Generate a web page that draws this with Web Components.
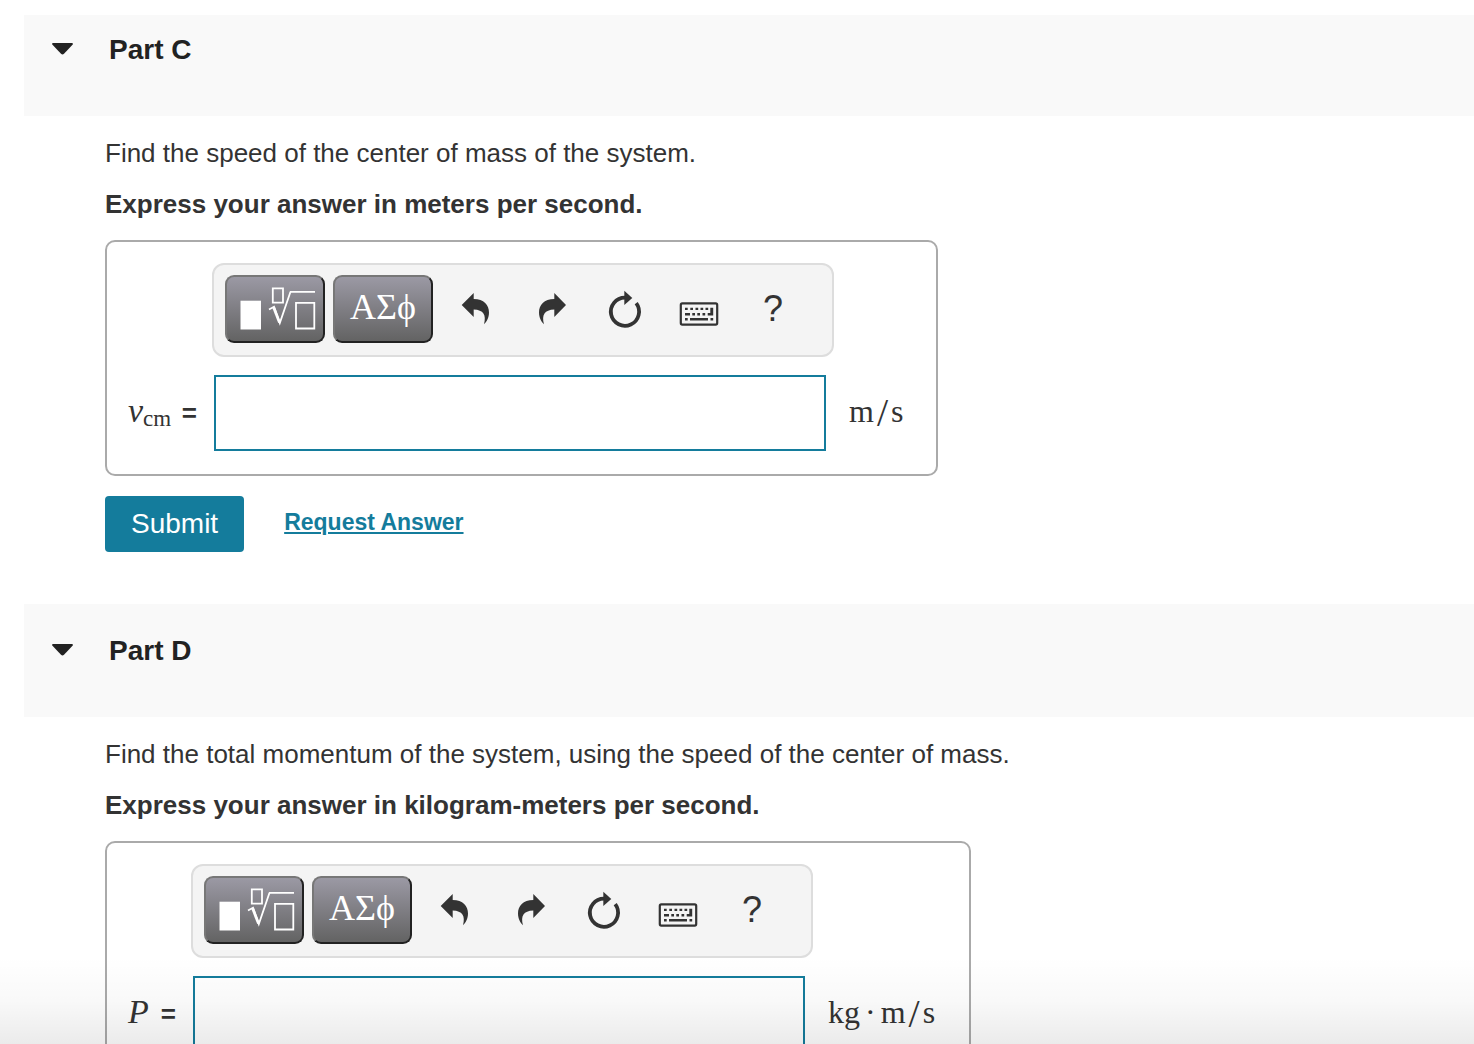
<!DOCTYPE html>
<html lang="en">
<head>
<meta charset="utf-8">
<title>Assignment</title>
<style>
  body { margin: 0; background: #fff; color: #333; font-family: "Liberation Sans", Arial, sans-serif; }
  answer-box i { font-size: 34px; line-height: 32px; }
  answer-box sub { font-size: 23px; line-height: 0; vertical-align: -4px; }
  answer-box .op { padding: 0 5px; }
  answer-box .slash { padding: 0 3px; font-size: 40px; line-height: 0; vertical-align: -4px; }
</style>
</head>
<body>
<assignment-page>
  <part-section heading="Part C" compact>
    <p>Find the speed of the center of mass of the system.</p>
    <p><strong>Express your answer in meters per second.</strong></p>
    <answer-box style="--label: 84px; --unit: 55px">
      <span slot="label"><i>v</i><sub>cm</sub></span>
      <span slot="unit">m<span class="slash">/</span>s</span>
    </answer-box>
    <answer-actions></answer-actions>
  </part-section>
  <part-section heading="Part D">
    <p>Find the total momentum of the system, using the speed of the center of mass.</p>
    <p><strong>Express your answer in kilogram-meters per second.</strong></p>
    <answer-box style="--label: 63px; --unit: 109px">
      <span slot="label"><i>P</i></span>
      <span slot="unit">kg<span class="op">·</span>m<span class="slash">/</span>s</span>
    </answer-box>
  </part-section>
</assignment-page>

<template id="page-t">
  <style>
    :host { display: block; position: relative; height: 100vh; overflow: hidden; }
    main { display: flex; flex-direction: column; gap: 52px; padding: 15px 0 0 24px; }
    .fade { position: absolute; inset: auto 0 0 0; height: 88px; pointer-events: none;
      background: linear-gradient(rgba(0,0,0,0), rgba(0,0,0,.025) 50%, rgba(0,0,0,.08)); }
  </style>
  <main><slot></slot></main>
  <div class="fade"></div>
</template>

<template id="part-t">
  <style>
    :host { display: block; }
    header { display: flex; align-items: center; gap: 36px; padding: 30px 28px 49px; background: #f9f9f9; color: #222; }
    :host([compact]) header { padding-top: 18px; }
    button { display: block; border: 0; padding: 0 0 3px; background: none; color: inherit; }
    svg { display: block; }
    h2 { margin: 0; font-size: 28px; line-height: 34px; }
    .body { display: flex; flex-direction: column; gap: 20px; padding: 22px 81px 0; font-size: 26px; line-height: 31px; }
    ::slotted(p) { margin: 0; }
  </style>
  <header>
    <button type="button" aria-label="Collapse"><svg width="21" height="12" viewBox="0 0 21 12"><path fill="#222" d="M1 0H20Q21.500 .5 20.500 1.800L12 10.800Q10.500 12.200 9 10.800L.5 1.800Q-.5 .5 1 0Z"/></svg></button>
    <h2></h2>
  </header>
  <div class="body"><slot></slot></div>
</template>

<template id="tools-t">
  <style>
    :host { display: flex; gap: 8px; padding: 10px 11px 12px; border: 2px solid #ddd; border-radius: 12px; background: #f4f4f4; }
    button { display: flex; align-items: center; justify-content: center; height: 68px; padding: 0; margin: 0; color: #333; }
    svg { display: block; }
    .key { width: 100px; border: 2px solid; border-color: #777 #222 #222 #777; border-radius: 9px; color: #fff;
      background: linear-gradient(#9b99a4, #636363); font: 36px/48px "Liberation Serif", serif; }
    .greek { padding-bottom: 4px; }
    .icons { display: flex; gap: 8px; margin-left: 3px; }
    .icons button { width: 66px; border: 0; background: none; font: 36px/68px "Liberation Sans", sans-serif; }
  </style>
  <button class="key" type="button" aria-label="Templates"><svg width="96" height="64" viewBox="2 2 96 64" fill="none" stroke="#fff" stroke-width="1.800">
    <path fill="#fff" stroke="none" d="M15.500 25.700H36V54.500H15.500Z"/>
    <path d="M47.800 13.300H58V27.600H47.800ZM71 27.800H89.300V53.500H71ZM65 16.800H90"/>
    <path d="M44 34.500L49 31.800L54.800 48L65.500 16.800"/><path stroke-width="2.800" d="M48.500 32L54.500 47.500"/></svg></button>
  <button class="key greek" type="button">ΑΣϕ</button>
  <div class="icons">
    <button type="button" aria-label="Undo"><svg width="66" height="68"><path fill="#333" d="M17.700 30L29.700 18V24C40 24 45 30 45 37.500C45 43 42.500 47 40 49.300C42.500 40 39.500 34.800 29.700 34.500V42Z"/></svg></button>
    <button type="button" aria-label="Redo"><svg width="66" height="68"><path fill="#333" d="M48 30L36.300 18V24C26 24 21 30 21 37.500C21 43 23.500 47 26 49.300C23.500 40 26.500 34.800 36.300 34.500V42Z"/></svg></button>
    <button type="button" aria-label="Reset"><svg width="66" height="68"><path fill="none" stroke="#333" stroke-width="3.800" d="M33 22.600A14.100 14.100 0 1 0 44.200 28.200"/><path fill="#333" d="M32.300 15.700L40.300 23L32.300 30Z"/></svg></button>
    <button type="button" aria-label="Keyboard shortcuts"><svg width="66" height="68"><rect x="14.800" y="28.400" width="36.400" height="21.200" rx="1.500" fill="none" stroke="#333" stroke-width="2.200"/><path fill="#333" d="M19 32.700h2.700v2.400h-2.700zM24.300 32.700h2.700v2.400h-2.700zM29.500 32.700h2.700v2.400h-2.700zM34.500 32.700h2.700v2.400h-2.700zM39.500 32.700h2.700v2.400h-2.700zM44.300 32.700h2.900v7.700h-5.500v-2.400h2.600zM19 38h5v2.400h-5zM26.300 38h2.700v2.400h-2.700zM31.300 38h2.700v2.400h-2.700zM36.500 38h2.700v2.400h-2.700zM19 43h2.700v2.400h-2.700zM24 43h18v2.400h-18zM44.500 43h2.700v2.400h-2.700z"/></svg></button>
    <button type="button" aria-label="Help">?</button>
  </div>
</template>

<template id="answer-t">
  <style>
    :host { display: grid; align-self: flex-start; grid-template-columns: var(--label) 622px 15px var(--unit);
      row-gap: 18px; padding: 21px 32px 23px 21px; border: 2px solid #aaa; border-radius: 10px; }
    math-toolbar { grid-column: 2; }
    label, .unit { grid-row: 2; font: 32px/40px "Liberation Serif", serif; padding-top: 16px; white-space: nowrap; }
    label { grid-column: 1; display: flex; justify-content: space-between; align-items: baseline; padding-right: 15px; }
    .unit { grid-column: 4; }
    .eq { font: bold 26px/40px "Liberation Sans", sans-serif; }
    input { grid-column: 2; grid-row: 2; box-sizing: border-box; width: 612px; height: 76px; margin: 0 0 0 2px;
      padding: 0 12px; border: 2px solid #147c9c; border-radius: 0; background: #fff; font-size: 28px; outline: 0; }
  </style>
  <math-toolbar></math-toolbar>
  <label for="answer"><slot name="label"></slot><span class="eq">=</span></label>
  <input id="answer" type="text">
  <div class="unit"><slot name="unit"></slot></div>
</template>

<template id="actions-t">
  <style>
    :host { display: flex; align-items: center; gap: 40px; }
    button { height: 56px; padding: 0 26px; border: 0; border-radius: 4px; background: #147c9c; color: #fff; font: 28px/32px "Liberation Sans", sans-serif; }
    a { padding-bottom: 4px; color: #147c9c; font-weight: bold; font-size: 23px; line-height: 28px;
      text-decoration-thickness: 2px; text-underline-offset: 2px; }
  </style>
  <button type="submit">Submit</button>
  <a href="#">Request Answer</a>
</template>

<script>
  const define = (name, id, setup) => customElements.define(name, class extends HTMLElement {
    constructor() {
      super();
      this.attachShadow({ mode: 'open' }).append(document.getElementById(id).content.cloneNode(true));
    }
    connectedCallback() { if (setup) setup(this); }
  });
  define('math-toolbar', 'tools-t');
  define('answer-actions', 'actions-t');
  define('answer-box', 'answer-t');
  define('part-section', 'part-t', el => { el.shadowRoot.querySelector('h2').textContent = el.getAttribute('heading'); });
  define('assignment-page', 'page-t');
</script>
</body>
</html>
